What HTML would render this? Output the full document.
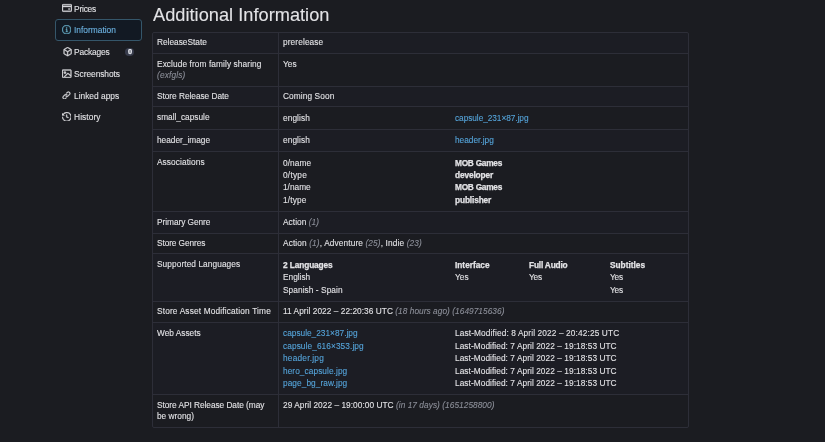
<!DOCTYPE html>
<html><head><meta charset="utf-8"><style>
html,body{margin:0;padding:0;width:825px;height:442px;overflow:hidden;background:#1b1c21;font-family:"Liberation Sans",sans-serif;}
.t{position:absolute;white-space:nowrap;-webkit-text-stroke:0.1px currentColor;will-change:transform;}
.r{position:absolute;box-sizing:border-box;}
i{font-style:italic}
</style></head><body>
<div class="r" style="left:152.5px;top:32.5px;width:536.0px;height:21.0px;background:#1c1d24"></div>
<div class="r" style="left:152.5px;top:86.5px;width:536.0px;height:20.0px;background:#1c1d24"></div>
<div class="r" style="left:152.5px;top:129.5px;width:536.0px;height:22.0px;background:#1c1d24"></div>
<div class="r" style="left:152.5px;top:211.5px;width:536.0px;height:22.0px;background:#1c1d24"></div>
<div class="r" style="left:152.5px;top:253.5px;width:536.0px;height:48.0px;background:#1c1d24"></div>
<div class="r" style="left:152.5px;top:322.5px;width:536.0px;height:72.0px;background:#1c1d24"></div>
<div class="r" style="left:152.5px;top:53.0px;width:536.0px;height:1px;background:#2d2e38"></div>
<div class="r" style="left:152.5px;top:86.0px;width:536.0px;height:1px;background:#2d2e38"></div>
<div class="r" style="left:152.5px;top:106.0px;width:536.0px;height:1px;background:#2d2e38"></div>
<div class="r" style="left:152.5px;top:129.0px;width:536.0px;height:1px;background:#2d2e38"></div>
<div class="r" style="left:152.5px;top:151.0px;width:536.0px;height:1px;background:#2d2e38"></div>
<div class="r" style="left:152.5px;top:211.0px;width:536.0px;height:1px;background:#2d2e38"></div>
<div class="r" style="left:152.5px;top:233.0px;width:536.0px;height:1px;background:#2d2e38"></div>
<div class="r" style="left:152.5px;top:253.0px;width:536.0px;height:1px;background:#2d2e38"></div>
<div class="r" style="left:152.5px;top:301.0px;width:536.0px;height:1px;background:#2d2e38"></div>
<div class="r" style="left:152.5px;top:322.0px;width:536.0px;height:1px;background:#2d2e38"></div>
<div class="r" style="left:152.5px;top:394.0px;width:536.0px;height:1px;background:#2d2e38"></div>
<div class="r" style="left:152.0px;top:32.0px;width:537.0px;height:395.8px;border:1px solid #2d2e38;border-radius:2px"></div>
<div class="r" style="left:277.8px;top:32.5px;width:1px;height:394.8px;background:#2d2e38"></div>
<div id="t0" class="t" style="left:157.2px;top:36.30px;font-size:8.3px;line-height:12.45px;color:#e3e3e6;font-weight:normal;font-style:normal;letter-spacing:0.000px;;">ReleaseState</div>
<div id="t1" class="t" style="left:283.4px;top:36.30px;font-size:8.3px;line-height:12.45px;color:#e3e3e6;font-weight:normal;font-style:normal;letter-spacing:0.111px;;">prerelease</div>
<div id="t2" class="t" style="left:157.2px;top:57.80px;font-size:8.3px;line-height:12.45px;color:#e3e3e6;font-weight:normal;font-style:normal;letter-spacing:0.096px;;">Exclude from family sharing</div>
<div id="t3" class="t" style="left:283.4px;top:57.60px;font-size:8.3px;line-height:12.45px;color:#e3e3e6;font-weight:normal;font-style:normal;letter-spacing:0.050px;;">Yes</div>
<div id="t4" class="t" style="left:157.2px;top:68.80px;font-size:8.3px;line-height:12.45px;color:#8c8f99;font-weight:normal;font-style:italic;letter-spacing:0.143px;;">(exfgls)</div>
<div id="t5" class="t" style="left:157.2px;top:90.10px;font-size:8.3px;line-height:12.45px;color:#e3e3e6;font-weight:normal;font-style:normal;letter-spacing:-0.029px;;">Store Release Date</div>
<div id="t6" class="t" style="left:283.4px;top:90.40px;font-size:8.3px;line-height:12.45px;color:#e3e3e6;font-weight:normal;font-style:normal;letter-spacing:0.100px;;">Coming Soon</div>
<div id="t7" class="t" style="left:157.2px;top:111.20px;font-size:8.3px;line-height:12.45px;color:#e3e3e6;font-weight:normal;font-style:normal;letter-spacing:0.000px;;">small_capsule</div>
<div id="t8" class="t" style="left:283.4px;top:111.60px;font-size:8.3px;line-height:12.45px;color:#e3e3e6;font-weight:normal;font-style:normal;letter-spacing:0.083px;;">english</div>
<div id="t9" class="t" style="left:454.8px;top:111.70px;font-size:8.3px;line-height:12.45px;color:#55a4da;font-weight:normal;font-style:normal;letter-spacing:-0.059px;;">capsule_231×87.jpg</div>
<div id="t10" class="t" style="left:157.2px;top:133.60px;font-size:8.3px;line-height:12.45px;color:#e3e3e6;font-weight:normal;font-style:normal;letter-spacing:-0.000px;;">header_image</div>
<div id="t11" class="t" style="left:283.4px;top:134.20px;font-size:8.3px;line-height:12.45px;color:#e3e3e6;font-weight:normal;font-style:normal;letter-spacing:0.083px;;">english</div>
<div id="t12" class="t" style="left:454.8px;top:134.40px;font-size:8.3px;line-height:12.45px;color:#55a4da;font-weight:normal;font-style:normal;;">header.jpg</div>
<div id="t13" class="t" style="left:157.2px;top:155.80px;font-size:8.3px;line-height:12.45px;color:#e3e3e6;font-weight:normal;font-style:normal;letter-spacing:0.091px;;">Associations</div>
<div id="t14" class="t" style="left:283.4px;top:156.50px;font-size:8.3px;line-height:12.45px;color:#e3e3e6;font-weight:normal;font-style:normal;letter-spacing:0.100px;;">0/name</div>
<div id="t15" class="t" style="left:454.8px;top:156.50px;font-size:8.3px;line-height:12.45px;color:#e3e3e6;font-weight:bold;font-style:normal;letter-spacing:-0.250px;-webkit-text-stroke:0.25px currentColor;">MOB Games</div>
<div id="t16" class="t" style="left:283.4px;top:168.85px;font-size:8.3px;line-height:12.45px;color:#e3e3e6;font-weight:normal;font-style:normal;letter-spacing:0.250px;;">0/type</div>
<div id="t17" class="t" style="left:454.8px;top:168.85px;font-size:8.3px;line-height:12.45px;color:#e3e3e6;font-weight:bold;font-style:normal;letter-spacing:-0.125px;-webkit-text-stroke:0.25px currentColor;">developer</div>
<div id="t18" class="t" style="left:283.4px;top:181.20px;font-size:8.3px;line-height:12.45px;color:#e3e3e6;font-weight:normal;font-style:normal;letter-spacing:0.000px;;">1/name</div>
<div id="t19" class="t" style="left:454.8px;top:181.20px;font-size:8.3px;line-height:12.45px;color:#e3e3e6;font-weight:bold;font-style:normal;letter-spacing:-0.250px;-webkit-text-stroke:0.25px currentColor;">MOB Games</div>
<div id="t20" class="t" style="left:283.4px;top:193.55px;font-size:8.3px;line-height:12.45px;color:#e3e3e6;font-weight:normal;font-style:normal;letter-spacing:0.170px;;">1/type</div>
<div id="t21" class="t" style="left:454.8px;top:193.55px;font-size:8.3px;line-height:12.45px;color:#e3e3e6;font-weight:bold;font-style:normal;letter-spacing:-0.125px;-webkit-text-stroke:0.25px currentColor;">publisher</div>
<div id="t22" class="t" style="left:157.2px;top:215.80px;font-size:8.3px;line-height:12.45px;color:#e3e3e6;font-weight:normal;font-style:normal;letter-spacing:-0.042px;;">Primary Genre</div>
<div id="t23" class="t" style="left:283.4px;top:215.60px;font-size:8.3px;line-height:12.45px;color:#e3e3e6;font-weight:normal;font-style:normal;letter-spacing:0.056px;;">Action <i style="color:#8c8f99">(1)</i></div>
<div id="t24" class="t" style="left:157.2px;top:236.90px;font-size:8.3px;line-height:12.45px;color:#e3e3e6;font-weight:normal;font-style:normal;letter-spacing:-0.091px;;">Store Genres</div>
<div id="t25" class="t" style="left:283.4px;top:237.10px;font-size:8.3px;line-height:12.45px;color:#e3e3e6;font-weight:normal;font-style:normal;letter-spacing:0.122px;;">Action <i style="color:#8c8f99">(1)</i>, Adventure <i style="color:#8c8f99">(25)</i>, Indie <i style="color:#8c8f99">(23)</i></div>
<div id="t26" class="t" style="left:157.2px;top:257.90px;font-size:8.3px;line-height:12.45px;color:#e3e3e6;font-weight:normal;font-style:normal;letter-spacing:0.083px;;">Supported Languages</div>
<div id="t27" class="t" style="left:283.4px;top:258.90px;font-size:8.3px;line-height:12.45px;color:#e3e3e6;font-weight:bold;font-style:normal;letter-spacing:-0.100px;-webkit-text-stroke:0.25px currentColor;">2 Languages</div>
<div id="t28" class="t" style="left:454.8px;top:258.90px;font-size:8.3px;line-height:12.45px;color:#e3e3e6;font-weight:bold;font-style:normal;-webkit-text-stroke:0.25px currentColor;">Interface</div>
<div id="t29" class="t" style="left:529.4px;top:258.90px;font-size:8.3px;line-height:12.45px;color:#e3e3e6;font-weight:bold;font-style:normal;letter-spacing:-0.183px;-webkit-text-stroke:0.25px currentColor;">Full Audio</div>
<div id="t30" class="t" style="left:610.3px;top:258.90px;font-size:8.3px;line-height:12.45px;color:#e3e3e6;font-weight:bold;font-style:normal;letter-spacing:0.000px;-webkit-text-stroke:0.25px currentColor;">Subtitles</div>
<div id="t31" class="t" style="left:283.4px;top:271.20px;font-size:8.3px;line-height:12.45px;color:#e3e3e6;font-weight:normal;font-style:normal;;">English</div>
<div id="t32" class="t" style="left:454.8px;top:271.20px;font-size:8.3px;line-height:12.45px;color:#e3e3e6;font-weight:normal;font-style:normal;letter-spacing:0.000px;;">Yes</div>
<div id="t33" class="t" style="left:529.4px;top:271.20px;font-size:8.3px;line-height:12.45px;color:#e3e3e6;font-weight:normal;font-style:normal;letter-spacing:-0.250px;;">Yes</div>
<div id="t34" class="t" style="left:610.3px;top:271.20px;font-size:8.3px;line-height:12.45px;color:#e3e3e6;font-weight:normal;font-style:normal;letter-spacing:-0.250px;;">Yes</div>
<div id="t35" class="t" style="left:283.4px;top:283.50px;font-size:8.3px;line-height:12.45px;color:#e3e3e6;font-weight:normal;font-style:normal;letter-spacing:0.071px;;">Spanish - Spain</div>
<div id="t36" class="t" style="left:610.3px;top:283.50px;font-size:8.3px;line-height:12.45px;color:#e3e3e6;font-weight:normal;font-style:normal;letter-spacing:-0.250px;;">Yes</div>
<div id="t37" class="t" style="left:157.2px;top:305.40px;font-size:8.3px;line-height:12.45px;color:#e3e3e6;font-weight:normal;font-style:normal;letter-spacing:0.161px;;">Store Asset Modification Time</div>
<div id="t38" class="t" style="left:283.4px;top:305.40px;font-size:8.3px;line-height:12.45px;color:#e3e3e6;font-weight:normal;font-style:normal;letter-spacing:0.045px;;">11 April 2022 – 22:20:36 UTC <i style="color:#8c8f99">(18 hours ago)</i> <i style="color:#8c8f99">(1649715636)</i></div>
<div id="t39" class="t" style="left:157.2px;top:326.50px;font-size:8.3px;line-height:12.45px;color:#e3e3e6;font-weight:normal;font-style:normal;letter-spacing:-0.000px;;">Web Assets</div>
<div id="t40" class="t" style="left:283.4px;top:327.30px;font-size:8.3px;line-height:12.45px;color:#55a4da;font-weight:normal;font-style:normal;letter-spacing:-0.000px;;">capsule_231×87.jpg</div>
<div id="t41" class="t" style="left:454.8px;top:327.30px;font-size:8.3px;line-height:12.45px;color:#e3e3e6;font-weight:normal;font-style:normal;letter-spacing:0.122px;;">Last-Modified: 8 April 2022 – 20:42:25 UTC</div>
<div id="t42" class="t" style="left:283.4px;top:339.70px;font-size:8.3px;line-height:12.45px;color:#55a4da;font-weight:normal;font-style:normal;letter-spacing:0.083px;;">capsule_616×353.jpg</div>
<div id="t43" class="t" style="left:454.8px;top:339.70px;font-size:8.3px;line-height:12.45px;color:#e3e3e6;font-weight:normal;font-style:normal;letter-spacing:0.061px;;">Last-Modified: 7 April 2022 – 19:18:53 UTC</div>
<div id="t44" class="t" style="left:283.4px;top:352.10px;font-size:8.3px;line-height:12.45px;color:#55a4da;font-weight:normal;font-style:normal;letter-spacing:0.222px;;">header.jpg</div>
<div id="t45" class="t" style="left:454.8px;top:352.10px;font-size:8.3px;line-height:12.45px;color:#e3e3e6;font-weight:normal;font-style:normal;letter-spacing:0.061px;;">Last-Modified: 7 April 2022 – 19:18:53 UTC</div>
<div id="t46" class="t" style="left:283.4px;top:364.50px;font-size:8.3px;line-height:12.45px;color:#55a4da;font-weight:normal;font-style:normal;letter-spacing:0.067px;;">hero_capsule.jpg</div>
<div id="t47" class="t" style="left:454.8px;top:364.50px;font-size:8.3px;line-height:12.45px;color:#e3e3e6;font-weight:normal;font-style:normal;letter-spacing:0.061px;;">Last-Modified: 7 April 2022 – 19:18:53 UTC</div>
<div id="t48" class="t" style="left:283.4px;top:376.90px;font-size:8.3px;line-height:12.45px;color:#55a4da;font-weight:normal;font-style:normal;letter-spacing:0.071px;;">page_bg_raw.jpg</div>
<div id="t49" class="t" style="left:454.8px;top:376.90px;font-size:8.3px;line-height:12.45px;color:#e3e3e6;font-weight:normal;font-style:normal;letter-spacing:0.061px;;">Last-Modified: 7 April 2022 – 19:18:53 UTC</div>
<div id="t50" class="t" style="left:157.2px;top:398.90px;font-size:8.3px;line-height:12.45px;color:#e3e3e6;font-weight:normal;font-style:normal;letter-spacing:-0.038px;;">Store API Release Date (may</div>
<div id="t51" class="t" style="left:157.2px;top:409.90px;font-size:8.3px;line-height:12.45px;color:#e3e3e6;font-weight:normal;font-style:normal;;">be wrong)</div>
<div id="t52" class="t" style="left:283.4px;top:398.90px;font-size:8.3px;line-height:12.45px;color:#e3e3e6;font-weight:normal;font-style:normal;letter-spacing:0.047px;;">29 April 2022 – 19:00:00 UTC <i style="color:#8c8f99">(in 17 days)</i> <i style="color:#8c8f99">(1651258800)</i></div>
<div id="t53" class="t" style="left:152.8px;top:1.94px;font-size:18.2px;line-height:27.3px;color:#e3e3e6;font-weight:normal;font-style:normal;letter-spacing:0.024px;;">Additional Information</div>
<div class="r" style="left:55px;top:19.2px;width:86.5px;height:21.5px;border:1.2px solid #35566a;border-radius:3px;background:#121923"></div>
<div id="t54" class="t" style="left:74.0px;top:2.59px;font-size:8.4px;line-height:12.6px;color:#e3e3e6;font-weight:normal;font-style:normal;letter-spacing:-0.200px;;">Prices</div>
<div id="t55" class="t" style="left:74.0px;top:24.19px;font-size:8.4px;line-height:12.6px;color:#6db4e4;font-weight:normal;font-style:normal;letter-spacing:-0.000px;;">Information</div>
<div id="t56" class="t" style="left:74.0px;top:45.89px;font-size:8.4px;line-height:12.6px;color:#e3e3e6;font-weight:normal;font-style:normal;letter-spacing:-0.143px;;">Packages</div>
<div id="t57" class="t" style="left:74.0px;top:67.69px;font-size:8.4px;line-height:12.6px;color:#e3e3e6;font-weight:normal;font-style:normal;letter-spacing:-0.050px;;">Screenshots</div>
<div id="t58" class="t" style="left:74.0px;top:89.59px;font-size:8.4px;line-height:12.6px;color:#e3e3e6;font-weight:normal;font-style:normal;letter-spacing:0.000px;;">Linked apps</div>
<div id="t59" class="t" style="left:74.0px;top:110.79px;font-size:8.4px;line-height:12.6px;color:#e3e3e6;font-weight:normal;font-style:normal;letter-spacing:0.083px;;">History</div>
<div class="r" style="left:125.1px;top:48px;width:9.4px;height:8px;border-radius:4px;background:#383c4c"></div>
<div id="t60" class="t" style="left:127.7px;top:46.29px;font-size:7.4px;line-height:11.1px;color:#eef0f5;font-weight:bold;font-style:normal;-webkit-text-stroke:0.25px currentColor;">0</div>
<svg class="r" style="left:61.9px;top:2.96px" width="9.92" height="9.92" viewBox="0 0 16 16" fill="#d6d6da" stroke="#d6d6da" stroke-width="0.55" stroke-linejoin="round"><path d="M10.75 9a.75.75 0 0 0 0 1.5h1.5a.75.75 0 0 0 0-1.5h-1.5ZM0 3.75C0 2.784.784 2 1.75 2h12.5c.966 0 1.75.784 1.75 1.75v8.5A1.75 1.75 0 0 1 14.25 14H1.75A1.75 1.75 0 0 1 0 12.25ZM14.5 6.5h-13v5.75c0 .138.112.25.25.25h12.5a.25.25 0 0 0 .25-.25Zm0-2.75a.25.25 0 0 0-.25-.25H1.75a.25.25 0 0 0-.25.25V5h13Z"/></svg>
<svg class="r" style="left:62.0px;top:25.0px" width="9.28" height="9.28" viewBox="0 0 16 16" fill="#64a6c0" stroke="#64a6c0" stroke-width="0.55" stroke-linejoin="round"><path d="M0 8a8 8 0 1 1 16 0A8 8 0 0 1 0 8Zm8-6.5a6.5 6.5 0 1 0 0 13 6.5 6.5 0 0 0 0-13ZM6.5 7.75A.75.75 0 0 1 7.25 7h1a.75.75 0 0 1 .75.75v2.75h.25a.75.75 0 0 1 0 1.5h-2a.75.75 0 0 1 0-1.5h.25v-2h-.25a.75.75 0 0 1-.75-.75ZM8 6a1 1 0 1 1 0-2 1 1 0 0 1 0 2Z"/></svg>
<svg class="r" style="left:62.6px;top:47.4px" width="9.28" height="9.28" viewBox="0 0 16 16" fill="#d6d6da" stroke="#d6d6da" stroke-width="0.55" stroke-linejoin="round"><path d="m8.878.392 5.25 3.045c.54.314.872.89.872 1.514v6.098a1.75 1.75 0 0 1-.872 1.514l-5.25 3.045a1.75 1.75 0 0 1-1.756 0l-5.25-3.045A1.75 1.75 0 0 1 1 11.049V4.951c0-.624.332-1.201.872-1.514L7.122.392a1.75 1.75 0 0 1 1.756 0ZM7.875 1.69l-4.63 2.685L8 7.133l4.755-2.758-4.63-2.685a.248.248 0 0 0-.25 0ZM2.5 5.677v5.372c0 .09.047.171.125.216l4.625 2.683V8.432Zm6.25 8.271 4.625-2.683a.25.25 0 0 0 .125-.216V5.677L8.75 8.432Z"/></svg>
<svg class="r" style="left:62.1px;top:69.0px" width="9.44" height="9.44" viewBox="0 0 16 16" fill="#d6d6da" stroke="#d6d6da" stroke-width="0.55" stroke-linejoin="round"><path d="M16 13.25A1.75 1.75 0 0 1 14.25 15H1.75A1.75 1.75 0 0 1 0 13.25V2.75C0 1.784.784 1 1.75 1h12.5c.966 0 1.75.784 1.75 1.75ZM1.75 2.5a.25.25 0 0 0-.25.25v10.5c0 .138.112.25.25.25h.94l.03-.03 6.077-6.078a1.75 1.75 0 0 1 2.412-.06L14.5 10.31V2.75a.25.25 0 0 0-.25-.25Zm12.5 11a.25.25 0 0 0 .25-.25v-.917l-4.298-3.889a.25.25 0 0 0-.344.009L4.81 13.5ZM7 6a2 2 0 1 1-3.999.001A2 2 0 0 1 7 6ZM5.5 6a.5.5 0 1 0-1 0 .5.5 0 0 0 1 0Z"/></svg>
<svg class="r" style="left:62.47px;top:90.57px" width="8.88" height="8.88" viewBox="0 0 16 16" fill="#d6d6da" stroke="#d6d6da" stroke-width="0.55" stroke-linejoin="round"><path d="m7.775 3.275 1.25-1.25a3.5 3.5 0 1 1 4.95 4.95l-2.5 2.5a3.5 3.5 0 0 1-4.95 0 .751.751 0 0 1 .018-1.042.751.751 0 0 1 1.042-.018 1.998 1.998 0 0 0 2.83 0l2.5-2.5a2.002 2.002 0 0 0-2.83-2.83l-1.25 1.25a.751.751 0 0 1-1.042-.018.751.751 0 0 1-.018-1.042Zm-4.69 9.64a1.998 1.998 0 0 0 2.83 0l1.25-1.25a.751.751 0 0 1 1.042.018.751.751 0 0 1 .018 1.042l-1.25 1.25a3.5 3.5 0 1 1-4.95-4.95l2.5-2.5a3.5 3.5 0 0 1 4.95 0 .751.751 0 0 1-.018 1.042.751.751 0 0 1-1.042.018 1.998 1.998 0 0 0-2.83 0l-2.5 2.5a1.998 1.998 0 0 0 0 2.83Z"/></svg>
<svg class="r" style="left:61.8px;top:111.9px" width="9.6" height="9.6" viewBox="0 0 16 16" fill="#d6d6da" stroke="#d6d6da" stroke-width="0.55" stroke-linejoin="round"><path d="m.427 1.927 1.215 1.215a8.002 8.002 0 1 1-1.6 5.685.75.75 0 1 1 1.493-.154 6.5 6.5 0 1 0 1.18-4.458l1.358 1.358A.25.25 0 0 1 3.896 6H.25A.25.25 0 0 1 0 5.75V2.104a.25.25 0 0 1 .427-.177ZM7.75 4a.75.75 0 0 1 .75.75v2.992l2.028.812a.75.75 0 0 1-.557 1.392l-2.5-1A.751.751 0 0 1 7 8.25v-3.5A.75.75 0 0 1 7.75 4Z"/></svg>
</body></html>
